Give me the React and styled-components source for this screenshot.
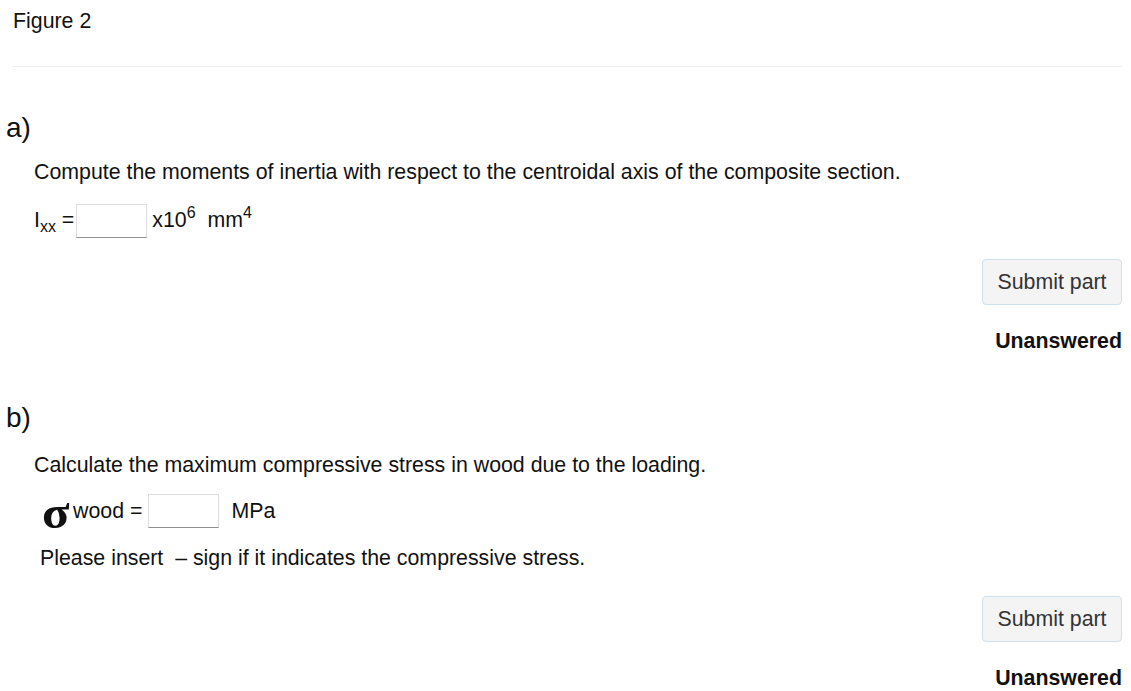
import React from "react";
import styled, { createGlobalStyle } from "styled-components";

const Global = createGlobalStyle`
  html, body { margin: 0; padding: 0; background: #fff; }
  body { font-family: "Liberation Sans", Arial, sans-serif; color: #111; }
`;

const Page = styled.div`
  width: 1131px;
  padding: 0 9px 0 6px;
  box-sizing: border-box;
`;

const FigureTitle = styled.div`
  font-size: 21.33px;
  line-height: 28px;
  padding: 7px 0 0 7px;
  height: 52px;
`;

const Divider = styled.hr`
  border: 0;
  border-top: 1px solid #eeeeee;
  margin: 7px 0 0 6px;
`;

const PartLabel = styled.h3`
  font-weight: normal;
  font-size: 28px;
  line-height: 32px;
  margin: ${(p) => p.$top}px 0 0 0;
`;

const Body = styled.div`
  padding-left: ${(p) => p.$indent}px;
`;

const Prompt = styled.p`
  font-size: 21.33px;
  line-height: 28px;
  margin: ${(p) => p.$top}px 0 0 0;
`;

const AnswerRow = styled.div`
  display: flex;
  align-items: center;
  font-size: 21.33px;
  line-height: 28px;
  margin-top: ${(p) => p.$top}px;
  height: 34px;
`;

const Input = styled.input`
  width: 71px;
  height: 34px;
  box-sizing: border-box;
  border: 1px solid #ddd;
  border-bottom: 1px solid #8f8f8f;
  background: #fff;
  margin: 0 ${(p) => p.$mr}px 0 ${(p) => p.$ml}px;
  padding: 0;
`;

const Sub = styled.span`
  font-size: 16px;
  position: relative;
  top: 5px;
`;

const Sup = styled.span`
  font-size: 16px;
  position: relative;
  top: -9px;
`;

const SigmaLabel = styled.span`
  display: flex;
  align-items: center;
  margin-left: 8px;
`;

const Sigma = styled.span`
  display: block;
  font-family: "Liberation Serif", "Times New Roman", serif;
  font-weight: bold;
  font-size: 46px;
  line-height: 28px;
  height: 28px;
  margin: 3px 6px 0 0;
  transform: scaleX(1.1);
  transform-origin: left center;
`;

const Note = styled.p`
  font-size: 21.33px;
  line-height: 28px;
  margin: 16px 0 0 6px;
`;

const Actions = styled.div`
  display: flex;
  flex-direction: column;
  align-items: flex-end;
  margin-top: ${(p) => p.$top}px;
`;

const SubmitButton = styled.button`
  font-family: "Liberation Sans", Arial, sans-serif;
  font-size: 21.33px;
  color: #333;
  background: #f4f4f4;
  border: 1px solid #cfe0ee;
  border-radius: 4px;
  width: 140px;
  height: 46px;
  padding: 0;
`;

const Status = styled.div`
  font-weight: bold;
  font-size: 21.33px;
  line-height: 28px;
  margin-top: 22px;
`;

export default function App() {
  return (
    <>
      <Global />
      <Page>
        <FigureTitle>Figure 2</FigureTitle>
        <Divider />
        <PartLabel $top={45}>a)</PartLabel>
        <Body $indent={28}>
          <Prompt $top={14}>
            Compute the moments of inertia with respect to the centroidal axis of the composite section.
          </Prompt>
          <AnswerRow $top={18}>
            <span>I<Sub>xx</Sub> =</span>
            <Input $ml={2} $mr={5} aria-label="Ixx" />
            <span>x10<Sup>6</Sup>&nbsp; mm<Sup>4</Sup></span>
          </AnswerRow>
        </Body>
        <Actions $top={21}>
          <SubmitButton>Submit part</SubmitButton>
          <Status>Unanswered</Status>
        </Actions>
        <PartLabel $top={47}>b)</PartLabel>
        <Body $indent={28}>
          <Prompt $top={17}>Calculate the maximum compressive stress in wood due to the loading.</Prompt>
          <AnswerRow $top={15}>
            <SigmaLabel><Sigma>σ</Sigma><span>wood =</span></SigmaLabel>
            <Input $ml={6} $mr={12} aria-label="sigma wood" />
            <span>MPa</span>
          </AnswerRow>
          <Note>Please insert &nbsp;– sign if it indicates the compressive stress.</Note>
        </Body>
        <Actions $top={24}>
          <SubmitButton>Submit part</SubmitButton>
          <Status>Unanswered</Status>
        </Actions>
      </Page>
    </>
  );
}
